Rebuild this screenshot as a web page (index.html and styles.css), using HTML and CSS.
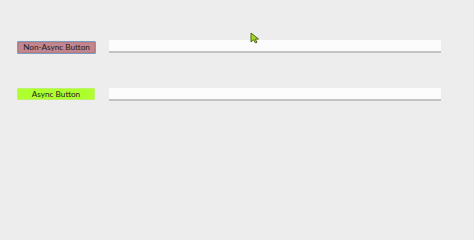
FILE: index.html
```html
<!DOCTYPE html>
<html>
<head>
<meta charset="utf-8">
<link rel="stylesheet" href="styles.css">
</head>
<body>
<div class="window">
  <div class="row">
    <div class="cell"><button class="btn btn-sync">Non-Async Button</button></div>
    <div class="field"></div>
  </div>
  <div class="row">
    <div class="cell"><button class="btn btn-async">Async Button</button></div>
    <div class="field"></div>
  </div>
  <svg class="cursor" width="10" height="12" viewBox="0 0 10 12">
    <path d="M1 1 L1 10 L3.5 7.8 L5.5 11 L7 10.2 L5.2 7.2 L8.5 7 Z" fill="#a6d22a" stroke="#4f6b12" stroke-width="1"/>
  </svg>
</div>
</body>
</html>
```
FILE: styles.css
```css
html, body {
  margin: 0;
  padding: 0;
}
body {
  width: 474px;
  height: 205px;
  background: #ededed;
  font-family: "Lato", "Open Sans", sans-serif;
  overflow: hidden;
}
.window {
  position: relative;
  height: 205px;
  padding: 40px 0 0 17px;
  box-sizing: border-box;
  display: flex;
  flex-direction: column;
  gap: 34px;
}
.row {
  display: flex;
  align-items: flex-start;
  gap: 13px;
  height: 14px;
}
.cell {
  width: 79px;
  display: flex;
}
.btn {
  margin: 1px 0 0 0;
  padding: 0;
  width: 79px;
  height: 13px;
  font-family: "Lato", "Open Sans", sans-serif;
  font-size: 8.2px;
  line-height: 11px;
  color: #222222;
  box-sizing: border-box;
  text-align: center;
  cursor: default;
}
.btn-sync {
  background: #c4868e;
  border: 1px solid #7c9cc0;
  border-radius: 1px;
  box-shadow: inset 0 0 0 1px #b87c84;
}
.btn-async {
  margin-top: 0;
  height: 12px;
  width: 78px;
  line-height: 10px;
  background: #aeff2e;
  border: 1px solid #c0f070;
}
.field {
  width: 332px;
  height: 13px;
  background: #fcfcfc;
  border-bottom: 2px solid #c4c4c4;
  box-sizing: border-box;
}
.cursor {
  position: absolute;
  left: 250px;
  top: 32px;
}
```
